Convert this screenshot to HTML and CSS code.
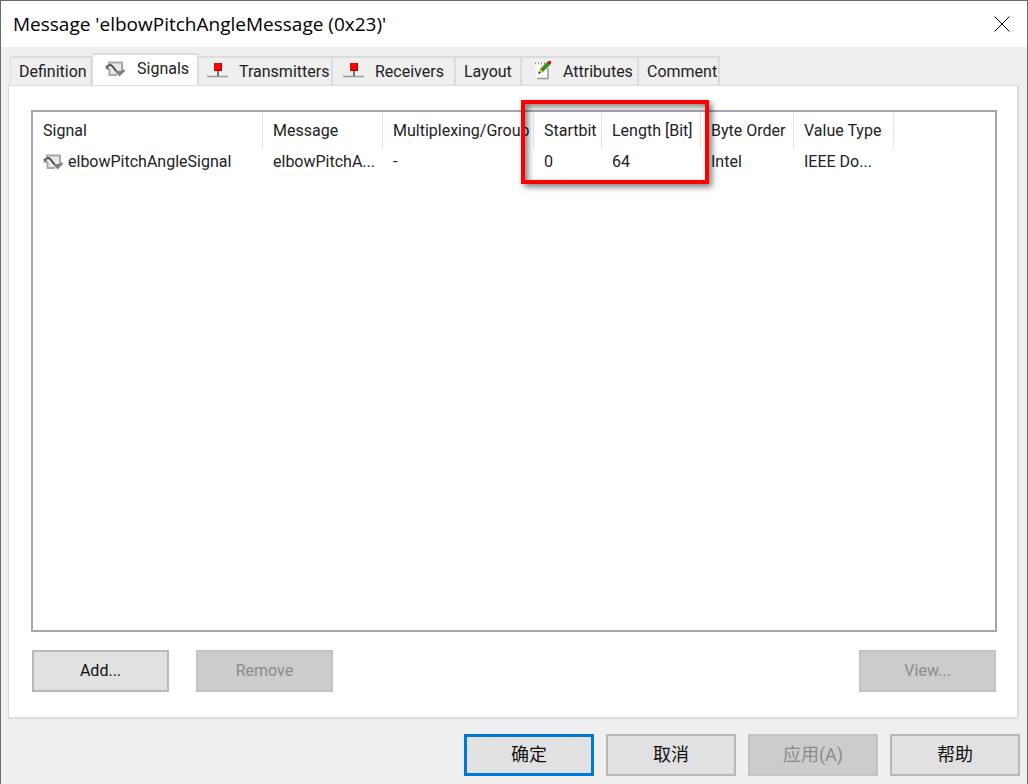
FILE: index.html
```html
<!DOCTYPE html>
<html lang="en">
<head>
<meta charset="utf-8">
<title>Message 'elbowPitchAngleMessage (0x23)'</title>
<link rel="stylesheet" href="styles.css">
</head>
<body>
<svg class="sprite" aria-hidden="true">
  <symbol id="signal" viewBox="0 0 21 17">
    <path d="M4 1.500H17V13H4Z" fill="#e8e8e8"/>
    <path d="M4 5V1.500H17V10M4.500 8V14H12" fill="none" stroke="#a8a8a8" stroke-width="2"/>
    <path d="M1 6.500Q5 2 8 6T14 13" fill="none" stroke="#4a4a4a" stroke-width="2"/>
    <path d="M14 13L19.500 9" fill="none" stroke="#777" stroke-width="2"/>
    <path d="M10 10H20L14.500 15.500Z" fill="#808080"/>
    <path d="M0 8L4 4V9Z" fill="#888"/>
  </symbol>
  <symbol id="node" viewBox="0 0 21 15">
    <path d="M0 13.500H21" stroke="#999" stroke-width="1.500"/>
    <path d="M11 7V13" stroke="#777" stroke-width="2"/>
    <path d="M7 0H15V8H7Z" fill="#b00000"/>
    <path d="M7 0H14V7H7Z" fill="#f00"/>
  </symbol>
  <symbol id="note" viewBox="0 0 18 20">
    <path d="M1 3H14V18H2Z" fill="#fff"/>
    <path d="M1 3.500H12" stroke="#777" stroke-width="1.500" stroke-dasharray="1 2"/>
    <path d="M14 8V18.500H3" fill="none" stroke="#999" stroke-width="1.500"/>
    <path d="M7 11L15 3" stroke="#3a9014" stroke-width="4"/>
    <path d="M5 13L6 9L9 12Z" fill="#e6dc28"/>
    <path d="M4 14L5 11L7 13Z" fill="#333"/>
    <path d="M14 1H17V4H14Z" fill="#e01818"/>
  </symbol>
</svg>
<main class="dialog">
  <header class="titlebar">
    <h1 class="title">Message 'elbowPitchAngleMessage (0x23)'</h1>
    <button class="close" aria-label="Close"><svg width="16" height="16" viewBox="0 0 16 16"><path d="M.5.5l15 15M15.500.5l-15 15" stroke="#000" stroke-width="1"/></svg></button>
  </header>
  <div class="tabs" role="tablist">
    <button class="tab definition" role="tab">Definition</button>
    <button class="tab signals" role="tab" aria-selected="true"><svg width="21" height="17"><use href="#signal"/></svg>Signals</button>
    <button class="tab transmitters" role="tab"><svg width="21" height="15"><use href="#node"/></svg>Transmitters</button>
    <button class="tab receivers" role="tab"><svg width="21" height="15"><use href="#node"/></svg>Receivers</button>
    <button class="tab layout" role="tab">Layout</button>
    <button class="tab attributes" role="tab"><svg width="18" height="20"><use href="#note"/></svg>Attributes</button>
    <button class="tab comment" role="tab">Comment</button>
  </div>
  <section class="panel" role="tabpanel">
    <div class="list">
      <table class="table">
        <colgroup><col class="c-signal"><col class="c-message"><col class="c-group"><col class="c-start"><col class="c-length"><col class="c-order"><col class="c-type"></colgroup>
        <thead><tr><th>Signal</th><th>Message</th><th>Multiplexing/Group</th><th>Startbit</th><th>Length [Bit]</th><th>Byte Order</th><th>Value Type</th></tr></thead>
        <tbody><tr><td><span class="name"><svg width="21" height="17"><use href="#signal"/></svg>elbowPitchAngleSignal</span></td><td>elbowPitchA...</td><td>-</td><td>0</td><td>64</td><td>Intel</td><td>IEEE Do...</td></tr></tbody>
      </table>
      <div class="highlight"></div>
    </div>
    <div class="actions">
      <button class="btn wide">Add...</button>
      <button class="btn wide" disabled>Remove</button>
      <button class="btn wide last" disabled>View...</button>
    </div>
  </section>
  <footer class="footer">
    <button class="btn primary">确定</button>
    <button class="btn">取消</button>
    <button class="btn" disabled>应用(A)</button>
    <button class="btn">帮助</button>
  </footer>
</main>
</body>
</html>
```
FILE: styles.css
```css
* { box-sizing: border-box; }
body {
  margin: 0;
  font-family: Roboto, "Noto Sans CJK SC", sans-serif;
  font-size: 16px;
  line-height: 20px;
  color: #222;
}
button { font: inherit; color: inherit; cursor: default; white-space: nowrap; }
svg { display: block; flex: none; }
.sprite { position: absolute; width: 0; height: 0; }
.dialog {
  display: flex;
  flex-direction: column;
  min-height: 100vh;
  background: #efefef;
  border: 1px solid #6b6b6f;
  border-bottom: 0;
}
.titlebar {
  display: flex;
  align-items: center;
  justify-content: space-between;
  height: 46px;
  padding: 0 17px 0 12px;
  background: #fff;
}
.title {
  margin: 0;
  font-family: "Open Sans", "Noto Sans", sans-serif;
  font-size: 19px;
  font-weight: 400;
  line-height: 24px;
  color: #000;
}
.close { border: 0; padding: 0; background: none; }

.tabs {
  display: flex;
  align-items: flex-end;
  padding: 6px 9px 0;
}
.tab {
  display: flex;
  align-items: center;
  gap: 11px;
  height: 29px;
  padding: 1px 0 0 8px;
  border: 1px solid #dcdcdc;
  border-width: 2px 2px 0 0;
  background: #efefef;
}
.tab svg { margin-bottom: 4px; }
.tab[aria-selected="true"] {
  height: 32px;
  padding: 0 0 2px 12px;
  border-left-width: 1px;
  background: #fff;
}
.tab[aria-selected="true"] svg { margin-bottom: 0; }
.definition { width: 82px; border-left-width: 1px; }
.signals { width: 107px; }
.transmitters { width: 134px; }
.receivers { width: 123px; padding-left: 10px; }
.layout { width: 66px; }
.attributes { width: 117px; padding-left: 12px; }
.comment { width: 81px; }

.panel {
  display: flex;
  flex: 1;
  flex-direction: column;
  gap: 18px;
  margin: 0 8px 0 7px;
  padding: 24px 20px 25px 22px;
  border: 1px solid #dcdcdc;
  border-width: 1px 2px 2px 1px;
  background: #fff;
}
.list {
  position: relative;
  flex: 1;
  border: 2px solid #a3a7af;
}
.table {
  width: 861px;
  table-layout: fixed;
  border-collapse: separate;
  border-spacing: 0;
}
.c-signal { width: 230px; }
.c-message { width: 120px; }
.c-group { width: 151px; }
.c-start { width: 68px; }
.c-length { width: 99px; }
.c-order { width: 93px; }
.c-type { width: 100px; }
.table th, .table td {
  padding: 0 0 0 10px;
  font-weight: 400;
  text-align: left;
  white-space: nowrap;
}
.table th { height: 37px; border-right: 1px solid #e2e2e2; }
.table td { height: 26px; }
.name { display: flex; align-items: center; gap: 4px; }
.highlight {
  position: absolute;
  top: -12px;
  left: 488px;
  width: 188px;
  height: 84px;
  border: 4px solid #f00;
  box-shadow: 3px 3px 6px rgba(0, 0, 0, .5), inset 3px 3px 6px rgba(0, 0, 0, .5);
}

.actions { display: flex; gap: 27px; padding: 0 1px; }
.btn {
  width: 130px;
  height: 42px;
  padding: 0;
  border: 2px solid #b8b8b8;
  background: #e1e1e1;
  color: #111;
}
.btn:disabled { border-color: #c3c3c3; background: #ccc; color: #8b8b8b; }
.btn.wide { width: 137px; }
.last { margin-left: auto; }
.btn.primary { border: 3px solid #0078d7; }
.footer {
  display: flex;
  justify-content: flex-end;
  gap: 12px;
  padding: 15px 7px 8px;
  font-size: 18px;
}
```
